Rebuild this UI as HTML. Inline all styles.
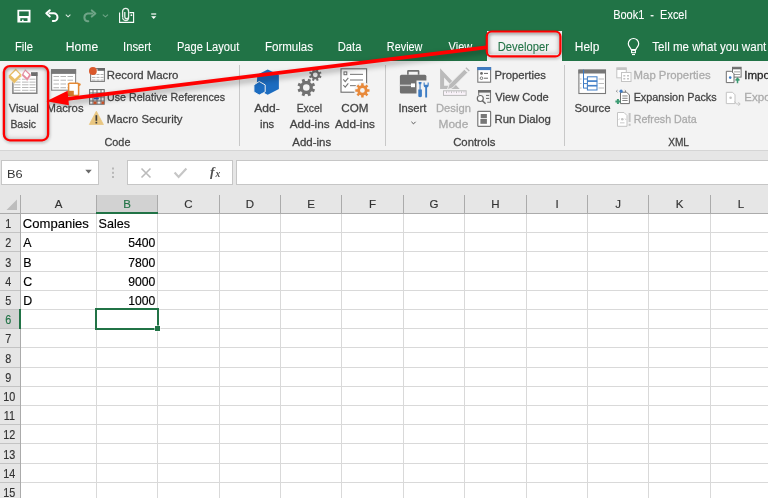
<!DOCTYPE html>
<html><head><meta charset="utf-8"><style>
html,body{margin:0;padding:0;background:#fff;overflow:hidden}
svg{display:block;will-change:transform}
text{font-family:"Liberation Sans",sans-serif}
</style></head><body>
<svg width="768" height="498" viewBox="0 0 768 498">
<rect x="0" y="0" width="768" height="61" fill="#217346"/>
<rect x="0" y="61" width="768" height="89" fill="#F3F3F3"/>
<rect x="0" y="150" width="768" height="1" fill="#D5D5D5"/>
<rect x="487" y="31" width="75" height="31" fill="#F3F3F3"/>
<rect x="239" y="65" width="1" height="81" fill="#C8C8C8"/>
<rect x="385" y="65" width="1" height="81" fill="#C8C8C8"/>
<rect x="564" y="65" width="1" height="81" fill="#C8C8C8"/>
<rect x="0" y="151" width="768" height="62" fill="#E6E6E6"/>
<rect x="1.5" y="160.5" width="97" height="24" fill="#FFFFFF" stroke="#C6C6C6" stroke-width="1"/>
<path d="M85.3 169.8 L91.8 169.8 L88.55 173.6 Z" fill="#6A6A6A"/>
<rect x="112" y="167.5" width="2" height="2" fill="#B8B8B8"/>
<rect x="112" y="171.8" width="2" height="2" fill="#B8B8B8"/>
<rect x="112" y="176" width="2" height="2" fill="#B8B8B8"/>
<rect x="127.5" y="160.5" width="105" height="24" fill="#FFFFFF" stroke="#C6C6C6" stroke-width="1"/>
<rect x="236.5" y="160.5" width="540" height="24" fill="#FFFFFF" stroke="#C6C6C6" stroke-width="1"/>
<path d="M141.5 168.5 L150.5 177.5 M150.5 168.5 L141.5 177.5" stroke="#BBBBBB" stroke-width="1.6" fill="none"/>
<path d="M174.6 172.6 L178.6 176.9 L186.4 168.4" stroke="#C6C6C6" stroke-width="2.2" fill="none"/>
<rect x="0" y="214" width="768" height="284" fill="#FFFFFF"/>
<rect x="0" y="214" width="20" height="284" fill="#E6E6E6"/>
<rect x="97" y="195" width="60" height="18" fill="#D2D2D2"/>
<rect x="0" y="310" width="20" height="18" fill="#D2D2D2"/>
<rect x="96" y="214" width="1" height="284" fill="#D9D9D9"/>
<rect x="157" y="214" width="1" height="284" fill="#D9D9D9"/>
<rect x="219" y="214" width="1" height="284" fill="#D9D9D9"/>
<rect x="280" y="214" width="1" height="284" fill="#D9D9D9"/>
<rect x="341" y="214" width="1" height="284" fill="#D9D9D9"/>
<rect x="403" y="214" width="1" height="284" fill="#D9D9D9"/>
<rect x="464" y="214" width="1" height="284" fill="#D9D9D9"/>
<rect x="526" y="214" width="1" height="284" fill="#D9D9D9"/>
<rect x="587" y="214" width="1" height="284" fill="#D9D9D9"/>
<rect x="648" y="214" width="1" height="284" fill="#D9D9D9"/>
<rect x="710" y="214" width="1" height="284" fill="#D9D9D9"/>
<rect x="21" y="232" width="747" height="1" fill="#D9D9D9"/>
<rect x="0" y="232" width="20" height="1" fill="#C3C3C3"/>
<rect x="21" y="251" width="747" height="1" fill="#D9D9D9"/>
<rect x="0" y="251" width="20" height="1" fill="#C3C3C3"/>
<rect x="21" y="271" width="747" height="1" fill="#D9D9D9"/>
<rect x="0" y="271" width="20" height="1" fill="#C3C3C3"/>
<rect x="21" y="290" width="747" height="1" fill="#D9D9D9"/>
<rect x="0" y="290" width="20" height="1" fill="#C3C3C3"/>
<rect x="21" y="309" width="747" height="1" fill="#D9D9D9"/>
<rect x="0" y="309" width="20" height="1" fill="#C3C3C3"/>
<rect x="21" y="328" width="747" height="1" fill="#D9D9D9"/>
<rect x="0" y="328" width="20" height="1" fill="#C3C3C3"/>
<rect x="21" y="347" width="747" height="1" fill="#D9D9D9"/>
<rect x="0" y="347" width="20" height="1" fill="#C3C3C3"/>
<rect x="21" y="367" width="747" height="1" fill="#D9D9D9"/>
<rect x="0" y="367" width="20" height="1" fill="#C3C3C3"/>
<rect x="21" y="386" width="747" height="1" fill="#D9D9D9"/>
<rect x="0" y="386" width="20" height="1" fill="#C3C3C3"/>
<rect x="21" y="405" width="747" height="1" fill="#D9D9D9"/>
<rect x="0" y="405" width="20" height="1" fill="#C3C3C3"/>
<rect x="21" y="424" width="747" height="1" fill="#D9D9D9"/>
<rect x="0" y="424" width="20" height="1" fill="#C3C3C3"/>
<rect x="21" y="443" width="747" height="1" fill="#D9D9D9"/>
<rect x="0" y="443" width="20" height="1" fill="#C3C3C3"/>
<rect x="21" y="463" width="747" height="1" fill="#D9D9D9"/>
<rect x="0" y="463" width="20" height="1" fill="#C3C3C3"/>
<rect x="21" y="482" width="747" height="1" fill="#D9D9D9"/>
<rect x="0" y="482" width="20" height="1" fill="#C3C3C3"/>
<rect x="21" y="501" width="747" height="1" fill="#D9D9D9"/>
<rect x="0" y="501" width="20" height="1" fill="#C3C3C3"/>
<rect x="96" y="195" width="1" height="18" fill="#ABABAB"/>
<rect x="157" y="195" width="1" height="18" fill="#ABABAB"/>
<rect x="219" y="195" width="1" height="18" fill="#ABABAB"/>
<rect x="280" y="195" width="1" height="18" fill="#ABABAB"/>
<rect x="341" y="195" width="1" height="18" fill="#ABABAB"/>
<rect x="403" y="195" width="1" height="18" fill="#ABABAB"/>
<rect x="464" y="195" width="1" height="18" fill="#ABABAB"/>
<rect x="526" y="195" width="1" height="18" fill="#ABABAB"/>
<rect x="587" y="195" width="1" height="18" fill="#ABABAB"/>
<rect x="648" y="195" width="1" height="18" fill="#ABABAB"/>
<rect x="710" y="195" width="1" height="18" fill="#ABABAB"/>
<rect x="0" y="213" width="768" height="1" fill="#ABABAB"/>
<rect x="20" y="195" width="1" height="303" fill="#ABABAB"/>
<rect x="96" y="212" width="62" height="2" fill="#217346"/>
<rect x="19" y="309" width="2" height="20" fill="#217346"/>
<path d="M17 199.5 L17 210 L6.5 210 Z" fill="#BDBDBD"/>
<rect x="96" y="309" width="62" height="20" fill="none" stroke="#217346" stroke-width="2"/>
<rect x="154.5" y="325.5" width="6" height="6" fill="#FFFFFF"/>
<rect x="155" y="326" width="5" height="5" fill="#217346"/>
<rect x="17.4" y="9.8" width="13.1" height="12.7" fill="#FFFFFF"/>
<rect x="19.2" y="11.4" width="9.5" height="4.6" fill="#217346"/>
<rect x="20.3" y="18.2" width="7.2" height="2.8" fill="#217346"/>
<rect x="22" y="19.6" width="1.6" height="1.6" fill="#FFFFFF"/>
<path d="M49.8 10.2 L46.3 13.3 L49.8 16.4" stroke="#FFFFFF" stroke-width="2" fill="none" stroke-linecap="round" stroke-linejoin="round"/>
<path d="M49.5 13.3 L53.6 13.3 A3.9 3.9 0 0 1 53.6 21.1 L52.8 21.1" stroke="#FFFFFF" stroke-width="2" fill="none" stroke-linecap="round"/>
<path d="M65.8 14.6 L68.1 16.8 L70.4 14.6" stroke="#D8E6DD" stroke-width="1.1" fill="none"/>
<g opacity="0.35"><path d="M91.8 10.4 L95.3 13.5 L91.8 16.6" stroke="#FFFFFF" stroke-width="2" fill="none" stroke-linecap="round" stroke-linejoin="round"/><path d="M92.1 13.5 L87.5 13.5 A4 4 0 0 0 87.5 21.3 L88.3 21.3" stroke="#FFFFFF" stroke-width="2" fill="none" stroke-linecap="round"/><path d="M102.8 14.6 L105.4 16.8 L108 14.6" stroke="#FFFFFF" stroke-width="1.1" fill="none"/></g>
<path d="M119.6 12.6 L119.6 22.4 L133.6 22.4 L133.6 12.6 L129.5 12.6" stroke="#FFFFFF" stroke-width="1.1" fill="none"/>
<path d="M122.6 17.5 L122.6 11.4 A3 3 0 0 1 128.6 11.4 L128.6 16.8 A1.9 1.9 0 0 1 124.8 16.8 L124.8 12" stroke="#E8F0EA" stroke-width="1.3" fill="none"/><path d="M122.6 17.5 A3 3 0 0 0 128.6 17.5" stroke="#E8F0EA" stroke-width="1.3" fill="none"/>
<circle cx="131.4" cy="15.2" r="0.9" fill="#FFFFFF"/>
<rect x="151.2" y="13.4" width="5" height="1.2" fill="#FFFFFF"/>
<path d="M151.1 16.3 L156.3 16.3 L153.7 18.9 Z" fill="#FFFFFF"/>
<path d="M631.1 49.6 C630.6 47.6 628.3 46.6 628.3 43.7 A5.2 5.2 0 0 1 638.7 43.7 C638.7 46.6 636.4 47.6 635.9 49.6 Z" stroke="#FFFFFF" stroke-width="1.2" fill="none" stroke-linejoin="round"/>
<rect x="631.6" y="50.3" width="3.8" height="2.4" stroke="#FFFFFF" stroke-width="1.1" fill="none"/>
<rect x="632" y="54" width="3" height="1.1" fill="#FFFFFF"/>
<rect x="12.9" y="72.4" width="23.9" height="20.9" fill="#FFFFFF"/><path d="M12.9 80 L12.9 93.3 L36.8 93.3 L36.8 72.2" stroke="#858585" stroke-width="1.5" fill="none"/>
<rect x="31" y="72.2" width="6.5" height="3.8" fill="#6E6E6E"/>
<rect x="14.2" y="78.7" width="6.300000000000001" height="1" fill="#B8B8B8"/>
<rect x="22" y="78.7" width="6.5" height="1" fill="#B8B8B8"/>
<rect x="29.5" y="78.7" width="6.0" height="1" fill="#B8B8B8"/>
<rect x="14.2" y="81.6" width="6.300000000000001" height="1" fill="#B8B8B8"/>
<rect x="22" y="81.6" width="6.5" height="1" fill="#B8B8B8"/>
<rect x="29.5" y="81.6" width="6.0" height="1" fill="#B8B8B8"/>
<rect x="14.2" y="84.3" width="6.300000000000001" height="1" fill="#B8B8B8"/>
<rect x="22" y="84.3" width="6.5" height="1" fill="#B8B8B8"/>
<rect x="29.5" y="84.3" width="6.0" height="1" fill="#B8B8B8"/>
<rect x="14.2" y="87.0" width="6.300000000000001" height="1" fill="#B8B8B8"/>
<rect x="22" y="87.0" width="6.5" height="1" fill="#B8B8B8"/>
<rect x="29.5" y="87.0" width="6.0" height="1" fill="#B8B8B8"/>
<rect x="14.2" y="89.8" width="6.300000000000001" height="1" fill="#B8B8B8"/>
<rect x="22" y="89.8" width="6.5" height="1" fill="#B8B8B8"/>
<rect x="29.5" y="89.8" width="6.0" height="1" fill="#B8B8B8"/>
<path d="M15.7 68.2 L21.4 74.3 L21.4 76.3 L14.2 83.7 L8.6 77.7 L8.6 75.4 Z" fill="#E9BF68" stroke="#F3F3F3" stroke-width="0.5"/>
<path d="M15.8 70.6 L19.7 74.5 L14.8 78.9 L10.8 75.2 Z" fill="#FFFFFF"/>
<path d="M25.2 69 L30.9 74.5 L30.9 75.8 L27.3 80.9 L21.8 75.6 L21.8 74.3 Z" fill="#E58A9E" stroke="#F3F3F3" stroke-width="0.5"/>
<path d="M25.3 71 L29.1 74.7 L27.1 77.7 L23.4 74.2 Z" fill="#FFFFFF"/>
<rect x="51.6" y="69.6" width="24" height="20.6" fill="#FFFFFF" stroke="#8A8A8A" stroke-width="1.1"/>
<rect x="51.1" y="69.1" width="25" height="4.8" fill="#787878"/>
<rect x="53.5" y="76.0" width="5.5" height="1" fill="#B5B5B5"/>
<rect x="60.5" y="76.0" width="5.5" height="1" fill="#B5B5B5"/>
<rect x="67.5" y="76.0" width="5.5" height="1" fill="#B5B5B5"/>
<rect x="53.5" y="79.7" width="5.5" height="1" fill="#B5B5B5"/>
<rect x="60.5" y="79.7" width="5.5" height="1" fill="#B5B5B5"/>
<rect x="67.5" y="79.7" width="5.5" height="1" fill="#B5B5B5"/>
<rect x="53.5" y="83.5" width="5.5" height="1" fill="#B5B5B5"/>
<rect x="60.5" y="83.5" width="5.5" height="1" fill="#B5B5B5"/>
<rect x="67.5" y="83.5" width="5.5" height="1" fill="#B5B5B5"/>
<rect x="53.5" y="87.2" width="5.5" height="1" fill="#B5B5B5"/>
<rect x="60.5" y="87.2" width="5.5" height="1" fill="#B5B5B5"/>
<rect x="67.5" y="87.2" width="5.5" height="1" fill="#B5B5B5"/>
<rect x="68.6" y="83.2" width="10" height="12.2" fill="#FFFFFF" stroke="#E58A35" stroke-width="1.5" rx="0.8"/>
<circle cx="79.3" cy="84.6" r="1.4" fill="#E58A35"/>
<rect x="68" y="90.8" width="5.8" height="5.2" fill="#D47B2A"/>
<rect x="90.6" y="68.6" width="13.8" height="12.8" fill="#FFFFFF" stroke="#7C7C7C" stroke-width="1.1"/>
<rect x="97.5" y="68" width="7.4" height="2.8" fill="#686868"/>
<rect x="92" y="74.1" width="3.5" height="0.9" fill="#A8A8A8"/>
<rect x="96.5" y="74.1" width="3.0" height="0.9" fill="#A8A8A8"/>
<rect x="100.5" y="74.1" width="3.0" height="0.9" fill="#A8A8A8"/>
<rect x="92" y="76.89999999999999" width="3.5" height="0.9" fill="#A8A8A8"/>
<rect x="96.5" y="76.89999999999999" width="3.0" height="0.9" fill="#A8A8A8"/>
<rect x="100.5" y="76.89999999999999" width="3.0" height="0.9" fill="#A8A8A8"/>
<rect x="92" y="79.6" width="3.5" height="0.9" fill="#A8A8A8"/>
<rect x="96.5" y="79.6" width="3.0" height="0.9" fill="#A8A8A8"/>
<rect x="100.5" y="79.6" width="3.0" height="0.9" fill="#A8A8A8"/>
<circle cx="92.9" cy="71" r="3.9" fill="#D9582B"/>
<rect x="89.6" y="89.6" width="14.6" height="14.6" fill="#FFFFFF" stroke="#6E6E6E" stroke-width="1.1"/>
<rect x="92.5" y="89.6" width="1" height="14.6" fill="#6E6E6E"/>
<rect x="89.6" y="92.5" width="14.6" height="1" fill="#6E6E6E"/>
<rect x="96.5" y="89.6" width="1" height="14.6" fill="#6E6E6E"/>
<rect x="89.6" y="96.5" width="14.6" height="1" fill="#6E6E6E"/>
<rect x="100.5" y="89.6" width="1" height="14.6" fill="#6E6E6E"/>
<rect x="89.6" y="100.5" width="14.6" height="1" fill="#6E6E6E"/>
<rect x="93.5" y="101.5" width="3" height="2.6" fill="#D5562A"/>
<rect x="101.5" y="101.5" width="2.6" height="2.6" fill="#D5562A"/>
<rect x="93.8" y="97.6" width="5" height="1.8" fill="#2B63B8"/>
<path d="M96.35 111.2 L103.4 124.5 L89.3 124.5 Z" fill="#E9C680" stroke="#E9C680" stroke-width="0.8" stroke-linejoin="round"/>
<rect x="95.5" y="115.2" width="1.7" height="5.6" fill="#3C3C3C"/>
<rect x="95.5" y="121.8" width="1.7" height="1.7" fill="#3C3C3C"/>
<path d="M267.7 69.4 L278.9 74.8 L278.9 88.9 L267.7 94.7 L256.5 88.9 L257.3 74.8 Z" fill="#1C6CC0"/>
<path d="M259.2 81.5 L265.2 84.9 L265.2 91.9 L259.2 95.1 L253.9 91.9 L253.9 84.9 Z" fill="#1C6CC0" stroke="#F3F3F3" stroke-width="1"/>
<path d="M312.81 88.58 L315.07 89.53 L313.94 92.26 L311.67 91.34 L310.14 92.87 L311.06 95.14 L308.33 96.27 L307.38 94.01 L305.22 94.01 L304.27 96.27 L301.54 95.14 L302.46 92.87 L300.93 91.34 L298.66 92.26 L297.53 89.53 L299.79 88.58 L299.79 86.42 L297.53 85.47 L298.66 82.74 L300.93 83.66 L302.46 82.13 L301.54 79.86 L304.27 78.73 L305.22 80.99 L307.38 80.99 L308.33 78.73 L311.06 79.86 L310.14 82.13 L311.67 83.66 L313.94 82.74 L315.07 85.47 L312.81 86.42 Z M309.60 87.50 A3.3 3.3 0 1 0 303.00 87.50 A3.3 3.3 0 1 0 309.60 87.50 Z" fill="#717171" fill-rule="evenodd"/>
<path d="M319.84 75.56 L321.53 76.25 L320.73 78.19 L319.04 77.47 L317.97 78.54 L318.69 80.23 L316.75 81.03 L316.06 79.34 L314.54 79.34 L313.85 81.03 L311.91 80.23 L312.63 78.54 L311.56 77.47 L309.87 78.19 L309.07 76.25 L310.76 75.56 L310.76 74.04 L309.07 73.35 L309.87 71.41 L311.56 72.13 L312.63 71.06 L311.91 69.37 L313.85 68.57 L314.54 70.26 L316.06 70.26 L316.75 68.57 L318.69 69.37 L317.97 71.06 L319.04 72.13 L320.73 71.41 L321.53 73.35 L319.84 74.04 Z M317.70 74.80 A2.4 2.4 0 1 0 312.90 74.80 A2.4 2.4 0 1 0 317.70 74.80 Z" fill="#717171" fill-rule="evenodd"/>
<rect x="341" y="68.8" width="25.6" height="23.4" fill="#FFFFFF" stroke="#6E6E6E" stroke-width="1.1"/>
<rect x="344" y="71.9" width="2.8" height="2.8" fill="none" stroke="#6E6E6E" stroke-width="1"/>
<rect x="350" y="73.80000000000001" width="13" height="1.2" fill="#8A8A8A"/>
<rect x="350" y="79.4" width="13" height="1.2" fill="#8A8A8A"/>
<rect x="350" y="85.0" width="13" height="1.2" fill="#8A8A8A"/>
<path d="M343.3 79.4 L345.2 81.6 L348.3 77.8 M343.3 85 L345.2 87.2 L348.3 83.4" stroke="#777777" stroke-width="1.1" fill="none"/>
<circle cx="362.4" cy="90.4" r="8.3" fill="#F3F3F3"/>
<path d="M367.45 89.17 L369.49 89.13 L369.49 91.67 L367.45 91.63 L366.84 93.10 L368.31 94.52 L366.52 96.31 L365.10 94.84 L363.63 95.45 L363.67 97.49 L361.13 97.49 L361.17 95.45 L359.70 94.84 L358.28 96.31 L356.49 94.52 L357.96 93.10 L357.35 91.63 L355.31 91.67 L355.31 89.13 L357.35 89.17 L357.96 87.70 L356.49 86.28 L358.28 84.49 L359.70 85.96 L361.17 85.35 L361.13 83.31 L363.67 83.31 L363.63 85.35 L365.10 85.96 L366.52 84.49 L368.31 86.28 L366.84 87.70 Z M364.80 90.40 A2.4 2.4 0 1 0 360.00 90.40 A2.4 2.4 0 1 0 364.80 90.40 Z" fill="#E8893A" fill-rule="evenodd"/>
<path d="M407.9 74.8 L407.9 71.3 Q407.9 70.9 408.4 70.9 L418.1 70.9 Q418.6 70.9 418.6 71.3 L418.6 74.8" stroke="#707070" stroke-width="1.6" fill="none"/>
<rect x="399.9" y="74.8" width="26.5" height="18.8" rx="1.6" fill="#707070"/>
<rect x="399.9" y="84.6" width="12" height="1.5" fill="#C9C9C9"/>
<rect x="411" y="83.4" width="4" height="3.8" fill="#FFFFFF"/>
<rect x="416.5" y="80.5" width="13.5" height="18" fill="#F3F3F3"/>
<path d="M418.6 82 L421.6 82 L421.2 84.2 L420.6 84.2 L420.6 89.6 L421.9 89.6 L421.9 96.6 Q420.1 98.1 418.3 96.6 L418.3 89.6 L419.5 89.6 L419.5 84.2 L418.9 84.2 Z" fill="#3D7DC5"/>
<path d="M423.6 82.4 L423.6 85.2 Q423.6 87.2 425.2 87.6 L425.2 97.6 L427.1 97.6 L427.1 87.6 Q428.7 87.2 428.7 85.2 L428.7 82.4 L427.6 82.4 L427.6 84.8 L424.7 84.8 L424.7 82.4 Z" fill="#3D7DC5"/>
<path d="M411.4 121.8 L413.5 123.9 L415.6 121.8" stroke="#555555" stroke-width="1" fill="none"/>
<path d="M440.1 68.3 L459.7 88.9 L440.1 88.9 Z M444.1 77.4 L444.1 85.7 L451.5 85.7 Z" fill="#BBBBBB" fill-rule="evenodd"/>
<path d="M447.3 89.6 L449 84.6 L464.4 69.2 L467.8 72.6 L452.4 88 Z" fill="#BBBBBB" stroke="#F3F3F3" stroke-width="0.9"/>
<path d="M465.4 68.2 L466.4 67.2 L469.8 70.6 L468.8 71.6 Z" fill="#BBBBBB"/>
<rect x="443.5" y="90.8" width="22.6" height="4.6" fill="#FAF3FA" stroke="#BBBBBB" stroke-width="1"/>
<rect x="446" y="91.3" width="0.9" height="1.8" fill="#BBBBBB"/>
<rect x="448.5" y="91.3" width="0.9" height="1.2" fill="#BBBBBB"/>
<rect x="451" y="91.3" width="0.9" height="1.8" fill="#BBBBBB"/>
<rect x="453.5" y="91.3" width="0.9" height="1.2" fill="#BBBBBB"/>
<rect x="456" y="91.3" width="0.9" height="1.8" fill="#BBBBBB"/>
<rect x="458.5" y="91.3" width="0.9" height="1.2" fill="#BBBBBB"/>
<rect x="461" y="91.3" width="0.9" height="1.8" fill="#BBBBBB"/>
<rect x="463.5" y="91.3" width="0.9" height="1.2" fill="#BBBBBB"/>
<rect x="477.8" y="67.6" width="12.8" height="14.6" fill="#FFFFFF" stroke="#7A7A7A" stroke-width="1.1"/>
<rect x="477.3" y="67.1" width="13.8" height="3" fill="#3E7BC2"/>
<circle cx="481.5" cy="73.4" r="1.4" fill="#6A6A6A"/><circle cx="481.5" cy="78.2" r="1.3" fill="none" stroke="#6A6A6A" stroke-width="0.9"/>
<rect x="484" y="72.9" width="4" height="1" fill="#6A6A6A"/><rect x="484" y="77.7" width="4" height="1" fill="#6A6A6A"/>
<path d="M478.7 95 L478.7 90.5 L490.5 90.5 L490.5 102.3 L487.2 102.3" stroke="#7A7A7A" stroke-width="1.1" fill="none"/>
<rect x="478.2" y="90" width="12.8" height="2.6" fill="#6A6A6A"/>
<rect x="486" y="94.9" width="3.2" height="1" fill="#6A6A6A"/><rect x="486" y="97.9" width="3.2" height="1" fill="#6A6A6A"/>
<circle cx="480.3" cy="98.5" r="3" fill="#FFFFFF" stroke="#6A6A6A" stroke-width="1.2"/>
<path d="M482.4 100.7 L485.6 103.8" stroke="#6A6A6A" stroke-width="1.5"/>
<rect x="477.8" y="111.4" width="12.8" height="14.9" fill="#FFFFFF" stroke="#7A7A7A" stroke-width="1.2" rx="0.5"/>
<rect x="480.7" y="114" width="6.2" height="4.2" fill="#7A7A7A"/><rect x="480.4" y="119" width="6.5" height="4.8" fill="#777777"/>
<rect x="578.9" y="70.1" width="26.6" height="23.4" fill="#FFFFFF" stroke="#7A7A7A" stroke-width="1.1"/>
<rect x="578.4" y="69.6" width="27.6" height="3.9" fill="#777777"/>
<rect x="598.5" y="78.5" width="5.5" height="1" fill="#BDBDBD"/>
<rect x="579.5" y="78.5" width="2" height="1" fill="#BDBDBD"/>
<rect x="598.5" y="83.0" width="5.5" height="1" fill="#BDBDBD"/>
<rect x="579.5" y="83.0" width="2" height="1" fill="#BDBDBD"/>
<rect x="598.5" y="87.5" width="5.5" height="1" fill="#BDBDBD"/>
<rect x="579.5" y="87.5" width="2" height="1" fill="#BDBDBD"/>
<path d="M583.5 69.6 L583.5 88.3 M583.5 79 L587 79 M583.5 83.6 L587 83.6 M583.5 88.1 L587 88.1" stroke="#3E7CC6" stroke-width="1" fill="none"/>
<rect x="587.4" y="76.8" width="9.6" height="4" fill="#FFFFFF" stroke="#3E7CC6" stroke-width="1"/>
<rect x="587.4" y="81.4" width="9.6" height="4" fill="#FFFFFF" stroke="#3E7CC6" stroke-width="1"/>
<rect x="587.4" y="86" width="9.6" height="4" fill="#FFFFFF" stroke="#3E7CC6" stroke-width="1"/>
<rect x="616.8" y="67.8" width="9.5" height="10" fill="#FFFFFF" stroke="#C4C4C4" stroke-width="1"/>
<rect x="616.8" y="67.8" width="9.5" height="2.2" fill="#C4C4C4"/>
<rect x="621.5" y="72.5" width="9.5" height="9" fill="#FFFFFF" stroke="#C4C4C4" stroke-width="1"/>
<rect x="623.3" y="75" width="2" height="1.5" fill="#C4C4C4"/><rect x="627" y="75" width="2" height="1.5" fill="#C4C4C4"/><rect x="623.3" y="78" width="2" height="1.5" fill="#C4C4C4"/><rect x="627" y="78" width="2" height="1.5" fill="#C4C4C4"/>
<path d="M620.5 92.2 L626.6 92.2 L629.4 95 L629.4 103.6 L620.5 103.6 Z" fill="#FFFFFF" stroke="#6E6E6E" stroke-width="1"/>
<rect x="622.3" y="95.5" width="5.3" height="0.9" fill="#777777"/>
<rect x="622.3" y="97.8" width="5.3" height="0.9" fill="#777777"/>
<rect x="622.3" y="100.1" width="5.3" height="0.9" fill="#777777"/>
<path d="M617.5 90.2 L616.3 91.2 L617.5 92.2 M624.8 90.2 L626 91.2 L624.8 92.2" stroke="#6E6E6E" stroke-width="0.8" fill="none"/>
<circle cx="621.1" cy="91.2" r="1.6" fill="#3E7CC6"/>
<path d="M615.4 101.4 L620.4 101.4 M617.9 98.9 L617.9 103.9" stroke="#3D9B73" stroke-width="2"/>
<path d="M617.5 112.5 L624 112.5 L627 115.5 L627 126.3 L617.5 126.3 Z" fill="#FFFFFF" stroke="#C4C4C4" stroke-width="1"/>
<path d="M619.6 118.5 L618.8 119.3 L619.6 120.1 M625 118.5 L625.8 119.3 L625 120.1" stroke="#C4C4C4" stroke-width="0.8" fill="none"/>
<circle cx="622.3" cy="119.3" r="1.3" fill="#C4C4C4"/>
<rect x="620" y="122.4" width="4.5" height="0.9" fill="#C4C4C4"/>
<rect x="628.6" y="113" width="2" height="9" fill="#C4C4C4"/><rect x="628.6" y="123.8" width="2" height="2" fill="#C4C4C4"/>
<rect x="732.5" y="67.3" width="8.6" height="9.8" fill="#FFFFFF" stroke="#6E6E6E" stroke-width="1"/>
<rect x="732.5" y="67.3" width="8.6" height="2" fill="#6E6E6E"/>
<rect x="734" y="71.5" width="6" height="0.8" fill="#8A8A8A"/><rect x="734" y="74" width="6" height="0.8" fill="#8A8A8A"/>
<path d="M726.3 71.3 L731.5 71.3 L734 73.8 L734 82.6 L726.3 82.6 Z" fill="#FFFFFF" stroke="#6E6E6E" stroke-width="1"/>
<circle cx="730.2" cy="77.6" r="1.3" fill="#3E7CC6"/>
<path d="M737.5 83.3 L737.5 78.5 M735.6 80.4 L737.5 78.3 L739.4 80.4" stroke="#3D9B73" stroke-width="1.5" fill="none"/>
<path d="M726.3 92.3 L732.5 92.3 L735 94.8 L735 103.6 L726.3 103.6 Z" fill="#FFFFFF" stroke="#C4C4C4" stroke-width="1"/>
<circle cx="730.6" cy="97.8" r="1.3" fill="#C4C4C4"/>
<path d="M734.5 101.5 L736.5 104 L740 104 M738.4 102.2 L740.2 104 L738.4 105.8" stroke="#C4C4C4" stroke-width="1" fill="none"/>
<text x="613.14" y="19.30" font-size="12.3" fill="#FFFFFF" stroke="#FFFFFF" stroke-width="0.08" textLength="73.78" lengthAdjust="spacingAndGlyphs" xml:space="preserve">Book1  -  Excel</text>
<text x="14.92" y="50.90" font-size="12" fill="#FFFFFF" stroke="#FFFFFF" stroke-width="0.08" textLength="18.14" lengthAdjust="spacingAndGlyphs" xml:space="preserve">File</text>
<text x="65.75" y="50.90" font-size="12" fill="#FFFFFF" stroke="#FFFFFF" stroke-width="0.08" textLength="32.44" lengthAdjust="spacingAndGlyphs" xml:space="preserve">Home</text>
<text x="123.02" y="50.90" font-size="12" fill="#FFFFFF" stroke="#FFFFFF" stroke-width="0.08" textLength="28.19" lengthAdjust="spacingAndGlyphs" xml:space="preserve">Insert</text>
<text x="176.93" y="50.90" font-size="12" fill="#FFFFFF" stroke="#FFFFFF" stroke-width="0.08" textLength="62.33" lengthAdjust="spacingAndGlyphs" xml:space="preserve">Page Layout</text>
<text x="264.90" y="50.90" font-size="12" fill="#FFFFFF" stroke="#FFFFFF" stroke-width="0.08" textLength="48.16" lengthAdjust="spacingAndGlyphs" xml:space="preserve">Formulas</text>
<text x="337.72" y="50.90" font-size="12" fill="#FFFFFF" stroke="#FFFFFF" stroke-width="0.08" textLength="23.81" lengthAdjust="spacingAndGlyphs" xml:space="preserve">Data</text>
<text x="386.85" y="50.90" font-size="12" fill="#FFFFFF" stroke="#FFFFFF" stroke-width="0.08" textLength="35.62" lengthAdjust="spacingAndGlyphs" xml:space="preserve">Review</text>
<text x="448.60" y="50.90" font-size="12" fill="#FFFFFF" stroke="#FFFFFF" stroke-width="0.08" textLength="23.57" lengthAdjust="spacingAndGlyphs" xml:space="preserve">View</text>
<text x="574.76" y="50.90" font-size="12" fill="#FFFFFF" stroke="#FFFFFF" stroke-width="0.08" textLength="24.62" lengthAdjust="spacingAndGlyphs" xml:space="preserve">Help</text>
<text x="652.32" y="50.90" font-size="12" fill="#FFFFFF" stroke="#FFFFFF" stroke-width="0.08" textLength="114.04" lengthAdjust="spacingAndGlyphs" xml:space="preserve">Tell me what you want</text>
<text x="497.72" y="51.00" font-size="12" fill="#217346" stroke="#217346" stroke-width="0.08" textLength="51.33" lengthAdjust="spacingAndGlyphs" xml:space="preserve">Developer</text>
<text x="8.70" y="112.00" font-size="11.6" fill="#444444" stroke="#444444" stroke-width="0.28" textLength="30.03" lengthAdjust="spacingAndGlyphs" xml:space="preserve">Visual</text>
<text x="10.38" y="127.70" font-size="11.6" fill="#444444" stroke="#444444" stroke-width="0.28" textLength="25.58" lengthAdjust="spacingAndGlyphs" xml:space="preserve">Basic</text>
<text x="46.52" y="112.00" font-size="11.6" fill="#444444" stroke="#444444" stroke-width="0.28" textLength="37.04" lengthAdjust="spacingAndGlyphs" xml:space="preserve">Macros</text>
<text x="106.81" y="79.40" font-size="11.6" fill="#444444" stroke="#444444" stroke-width="0.28" textLength="71.55" lengthAdjust="spacingAndGlyphs" xml:space="preserve">Record Macro</text>
<text x="107.03" y="101.20" font-size="11.6" fill="#444444" stroke="#444444" stroke-width="0.28" textLength="118.10" lengthAdjust="spacingAndGlyphs" xml:space="preserve">Use Relative References</text>
<text x="106.81" y="123.20" font-size="11.6" fill="#444444" stroke="#444444" stroke-width="0.28" textLength="75.69" lengthAdjust="spacingAndGlyphs" xml:space="preserve">Macro Security</text>
<text x="104.49" y="145.65" font-size="11.6" fill="#444444" stroke="#444444" stroke-width="0.28" textLength="25.95" lengthAdjust="spacingAndGlyphs" xml:space="preserve">Code</text>
<text x="254.30" y="112.00" font-size="11.6" fill="#444444" stroke="#444444" stroke-width="0.28" textLength="25.44" lengthAdjust="spacingAndGlyphs" xml:space="preserve">Add-</text>
<text x="259.90" y="127.70" font-size="11.6" fill="#444444" stroke="#444444" stroke-width="0.28" textLength="14.35" lengthAdjust="spacingAndGlyphs" xml:space="preserve">ins</text>
<text x="296.69" y="112.00" font-size="11.6" fill="#444444" stroke="#444444" stroke-width="0.28" textLength="25.40" lengthAdjust="spacingAndGlyphs" xml:space="preserve">Excel</text>
<text x="289.75" y="127.70" font-size="11.6" fill="#444444" stroke="#444444" stroke-width="0.28" textLength="39.92" lengthAdjust="spacingAndGlyphs" xml:space="preserve">Add-ins</text>
<text x="341.25" y="112.00" font-size="11.6" fill="#444444" stroke="#444444" stroke-width="0.28" textLength="27.23" lengthAdjust="spacingAndGlyphs" xml:space="preserve">COM</text>
<text x="335.00" y="127.70" font-size="11.6" fill="#444444" stroke="#444444" stroke-width="0.28" textLength="39.87" lengthAdjust="spacingAndGlyphs" xml:space="preserve">Add-ins</text>
<text x="292.25" y="145.65" font-size="11.6" fill="#444444" stroke="#444444" stroke-width="0.28" textLength="38.91" lengthAdjust="spacingAndGlyphs" xml:space="preserve">Add-ins</text>
<text x="398.42" y="112.00" font-size="11.6" fill="#444444" stroke="#444444" stroke-width="0.28" textLength="28.04" lengthAdjust="spacingAndGlyphs" xml:space="preserve">Insert</text>
<text x="436.02" y="112.00" font-size="11.6" fill="#ABABAB" stroke="#ABABAB" stroke-width="0.28" textLength="34.91" lengthAdjust="spacingAndGlyphs" xml:space="preserve">Design</text>
<text x="438.47" y="127.70" font-size="11.6" fill="#ABABAB" stroke="#ABABAB" stroke-width="0.28" textLength="29.81" lengthAdjust="spacingAndGlyphs" xml:space="preserve">Mode</text>
<text x="494.42" y="79.40" font-size="11.6" fill="#444444" stroke="#444444" stroke-width="0.28" textLength="51.43" lengthAdjust="spacingAndGlyphs" xml:space="preserve">Properties</text>
<text x="495.30" y="101.20" font-size="11.6" fill="#444444" stroke="#444444" stroke-width="0.28" textLength="53.45" lengthAdjust="spacingAndGlyphs" xml:space="preserve">View Code</text>
<text x="494.41" y="123.20" font-size="11.6" fill="#444444" stroke="#444444" stroke-width="0.28" textLength="56.43" lengthAdjust="spacingAndGlyphs" xml:space="preserve">Run Dialog</text>
<text x="453.17" y="145.65" font-size="11.6" fill="#444444" stroke="#444444" stroke-width="0.28" textLength="42.19" lengthAdjust="spacingAndGlyphs" xml:space="preserve">Controls</text>
<text x="574.54" y="112.00" font-size="11.6" fill="#444444" stroke="#444444" stroke-width="0.28" textLength="36.02" lengthAdjust="spacingAndGlyphs" xml:space="preserve">Source</text>
<text x="633.61" y="79.40" font-size="11.6" fill="#ABABAB" stroke="#ABABAB" stroke-width="0.28" textLength="77.04" lengthAdjust="spacingAndGlyphs" xml:space="preserve">Map Properties</text>
<text x="633.65" y="101.20" font-size="11.6" fill="#444444" stroke="#444444" stroke-width="0.28" textLength="82.98" lengthAdjust="spacingAndGlyphs" xml:space="preserve">Expansion Packs</text>
<text x="633.66" y="123.20" font-size="11.6" fill="#ABABAB" stroke="#ABABAB" stroke-width="0.28" textLength="63.07" lengthAdjust="spacingAndGlyphs" xml:space="preserve">Refresh Data</text>
<text x="668.14" y="145.65" font-size="11.6" fill="#444444" stroke="#444444" stroke-width="0.28" textLength="20.81" lengthAdjust="spacingAndGlyphs" xml:space="preserve">XML</text>
<text x="7.10" y="177.60" font-size="11.8" fill="#333333" stroke="#333333" stroke-width="0" textLength="15.61" lengthAdjust="spacingAndGlyphs" xml:space="preserve">B6</text>
<text x="22.79" y="228.00" font-size="12.6" fill="#000000" stroke="#000000" stroke-width="0.15" textLength="66.12" lengthAdjust="spacingAndGlyphs" xml:space="preserve">Companies</text>
<text x="98.51" y="228.30" font-size="12.6" fill="#000000" stroke="#000000" stroke-width="0.15" textLength="31.49" lengthAdjust="spacingAndGlyphs" xml:space="preserve">Sales</text>
<text x="58.50" y="208.00" font-size="11.5" fill="#333333" stroke="#333333" stroke-width="0.15" text-anchor="middle" style="font-family:'Liberation Sans';font-style:normal">A</text>
<text x="127.00" y="208.00" font-size="11.5" fill="#217346" stroke="#217346" stroke-width="0.15" text-anchor="middle" style="font-family:'Liberation Sans';font-style:normal">B</text>
<text x="188.50" y="208.00" font-size="11.5" fill="#333333" stroke="#333333" stroke-width="0.15" text-anchor="middle" style="font-family:'Liberation Sans';font-style:normal">C</text>
<text x="250.00" y="208.00" font-size="11.5" fill="#333333" stroke="#333333" stroke-width="0.15" text-anchor="middle" style="font-family:'Liberation Sans';font-style:normal">D</text>
<text x="311.00" y="208.00" font-size="11.5" fill="#333333" stroke="#333333" stroke-width="0.15" text-anchor="middle" style="font-family:'Liberation Sans';font-style:normal">E</text>
<text x="372.50" y="208.00" font-size="11.5" fill="#333333" stroke="#333333" stroke-width="0.15" text-anchor="middle" style="font-family:'Liberation Sans';font-style:normal">F</text>
<text x="434.00" y="208.00" font-size="11.5" fill="#333333" stroke="#333333" stroke-width="0.15" text-anchor="middle" style="font-family:'Liberation Sans';font-style:normal">G</text>
<text x="495.50" y="208.00" font-size="11.5" fill="#333333" stroke="#333333" stroke-width="0.15" text-anchor="middle" style="font-family:'Liberation Sans';font-style:normal">H</text>
<text x="557.00" y="208.00" font-size="11.5" fill="#333333" stroke="#333333" stroke-width="0.15" text-anchor="middle" style="font-family:'Liberation Sans';font-style:normal">I</text>
<text x="618.00" y="208.00" font-size="11.5" fill="#333333" stroke="#333333" stroke-width="0.15" text-anchor="middle" style="font-family:'Liberation Sans';font-style:normal">J</text>
<text x="679.50" y="208.00" font-size="11.5" fill="#333333" stroke="#333333" stroke-width="0.15" text-anchor="middle" style="font-family:'Liberation Sans';font-style:normal">K</text>
<text x="741.00" y="208.00" font-size="11.5" fill="#333333" stroke="#333333" stroke-width="0.15" text-anchor="middle" style="font-family:'Liberation Sans';font-style:normal">L</text>
<text x="8.30" y="227.80" font-size="12" fill="#333333" stroke="#333333" stroke-width="0.15" text-anchor="middle" transform="translate(8.30 0) scale(0.9 1) translate(-8.30 0)" style="font-family:'Liberation Sans';font-style:normal">1</text>
<text x="8.30" y="246.80" font-size="12" fill="#333333" stroke="#333333" stroke-width="0.15" text-anchor="middle" transform="translate(8.30 0) scale(0.9 1) translate(-8.30 0)" style="font-family:'Liberation Sans';font-style:normal">2</text>
<text x="8.30" y="266.80" font-size="12" fill="#333333" stroke="#333333" stroke-width="0.15" text-anchor="middle" transform="translate(8.30 0) scale(0.9 1) translate(-8.30 0)" style="font-family:'Liberation Sans';font-style:normal">3</text>
<text x="8.30" y="285.80" font-size="12" fill="#333333" stroke="#333333" stroke-width="0.15" text-anchor="middle" transform="translate(8.30 0) scale(0.9 1) translate(-8.30 0)" style="font-family:'Liberation Sans';font-style:normal">4</text>
<text x="8.30" y="304.80" font-size="12" fill="#333333" stroke="#333333" stroke-width="0.15" text-anchor="middle" transform="translate(8.30 0) scale(0.9 1) translate(-8.30 0)" style="font-family:'Liberation Sans';font-style:normal">5</text>
<text x="8.30" y="323.80" font-size="12" fill="#217346" stroke="#217346" stroke-width="0.15" text-anchor="middle" transform="translate(8.30 0) scale(0.9 1) translate(-8.30 0)" style="font-family:'Liberation Sans';font-style:normal">6</text>
<text x="8.30" y="342.80" font-size="12" fill="#333333" stroke="#333333" stroke-width="0.15" text-anchor="middle" transform="translate(8.30 0) scale(0.9 1) translate(-8.30 0)" style="font-family:'Liberation Sans';font-style:normal">7</text>
<text x="8.30" y="362.80" font-size="12" fill="#333333" stroke="#333333" stroke-width="0.15" text-anchor="middle" transform="translate(8.30 0) scale(0.9 1) translate(-8.30 0)" style="font-family:'Liberation Sans';font-style:normal">8</text>
<text x="8.30" y="381.80" font-size="12" fill="#333333" stroke="#333333" stroke-width="0.15" text-anchor="middle" transform="translate(8.30 0) scale(0.9 1) translate(-8.30 0)" style="font-family:'Liberation Sans';font-style:normal">9</text>
<text x="9.30" y="400.80" font-size="12" fill="#333333" stroke="#333333" stroke-width="0.15" text-anchor="middle" transform="translate(9.30 0) scale(0.9 1) translate(-9.30 0)" style="font-family:'Liberation Sans';font-style:normal">10</text>
<text x="9.30" y="419.80" font-size="12" fill="#333333" stroke="#333333" stroke-width="0.15" text-anchor="middle" transform="translate(9.30 0) scale(0.9 1) translate(-9.30 0)" style="font-family:'Liberation Sans';font-style:normal">11</text>
<text x="9.30" y="438.80" font-size="12" fill="#333333" stroke="#333333" stroke-width="0.15" text-anchor="middle" transform="translate(9.30 0) scale(0.9 1) translate(-9.30 0)" style="font-family:'Liberation Sans';font-style:normal">12</text>
<text x="9.30" y="458.80" font-size="12" fill="#333333" stroke="#333333" stroke-width="0.15" text-anchor="middle" transform="translate(9.30 0) scale(0.9 1) translate(-9.30 0)" style="font-family:'Liberation Sans';font-style:normal">13</text>
<text x="9.30" y="477.80" font-size="12" fill="#333333" stroke="#333333" stroke-width="0.15" text-anchor="middle" transform="translate(9.30 0) scale(0.9 1) translate(-9.30 0)" style="font-family:'Liberation Sans';font-style:normal">14</text>
<text x="9.30" y="496.80" font-size="12" fill="#333333" stroke="#333333" stroke-width="0.15" text-anchor="middle" transform="translate(9.30 0) scale(0.9 1) translate(-9.30 0)" style="font-family:'Liberation Sans';font-style:normal">15</text>
<text x="23.20" y="246.70" font-size="12.4" fill="#000000" stroke="#000000" stroke-width="0.15" text-anchor="start" style="font-family:'Liberation Sans';font-style:normal">A</text>
<text x="155.40" y="246.70" font-size="12.2" fill="#000000" stroke="#000000" stroke-width="0.15" text-anchor="end" style="font-family:'Liberation Sans';font-style:normal">5400</text>
<text x="23.20" y="266.70" font-size="12.4" fill="#000000" stroke="#000000" stroke-width="0.15" text-anchor="start" style="font-family:'Liberation Sans';font-style:normal">B</text>
<text x="155.40" y="266.70" font-size="12.2" fill="#000000" stroke="#000000" stroke-width="0.15" text-anchor="end" style="font-family:'Liberation Sans';font-style:normal">7800</text>
<text x="23.20" y="285.70" font-size="12.4" fill="#000000" stroke="#000000" stroke-width="0.15" text-anchor="start" style="font-family:'Liberation Sans';font-style:normal">C</text>
<text x="155.40" y="285.70" font-size="12.2" fill="#000000" stroke="#000000" stroke-width="0.15" text-anchor="end" style="font-family:'Liberation Sans';font-style:normal">9000</text>
<text x="23.20" y="304.70" font-size="12.4" fill="#000000" stroke="#000000" stroke-width="0.15" text-anchor="start" style="font-family:'Liberation Sans';font-style:normal">D</text>
<text x="155.40" y="304.70" font-size="12.2" fill="#000000" stroke="#000000" stroke-width="0.15" text-anchor="end" style="font-family:'Liberation Sans';font-style:normal">1000</text>
<text x="210.00" y="176.00" font-size="13.5" fill="#505050" stroke="#505050" stroke-width="0" text-anchor="start" style="font-family:'Liberation Serif';font-style:italic;font-weight:bold">f</text>
<text x="215.40" y="176.80" font-size="9.5" fill="#505050" stroke="#505050" stroke-width="0" text-anchor="start" style="font-family:'Liberation Serif';font-style:italic;font-weight:bold">x</text>
<text x="744.20" y="79.40" font-size="11.6" fill="#262626" stroke="#262626" stroke-width="0.28">Impo</text>
<text x="744.20" y="101.20" font-size="11.6" fill="#ABABAB" stroke="#ABABAB" stroke-width="0.28">Expo</text>
<defs><filter id="sh" x="-20%" y="-20%" width="140%" height="140%"><feGaussianBlur stdDeviation="1.6"/></filter><filter id="sh2" x="-20%" y="-300%" width="140%" height="700%"><feGaussianBlur stdDeviation="2.4"/></filter><filter id="ish" x="-20%" y="-20%" width="140%" height="140%"><feGaussianBlur stdDeviation="2.2"/></filter><clipPath id="c1"><rect x="4.8" y="67.2" width="42.3" height="72" rx="5"/></clipPath><clipPath id="c2"><rect x="487.9" y="32.5" width="71.4" height="22.1" rx="4"/></clipPath></defs>
<g clip-path="url(#c1)"><rect x="3.8" y="66.2" width="44.3" height="74" rx="6" fill="none" stroke="#9A9A9A" stroke-width="4" filter="url(#ish)" opacity="0.55"/></g>
<g clip-path="url(#c2)"><rect x="486.9" y="31.5" width="73.4" height="24.1" rx="5" fill="none" stroke="#9A9A9A" stroke-width="4" filter="url(#ish)" opacity="0.55"/></g>
<g filter="url(#sh)" opacity="0.28"><rect x="4.5" y="67.6" width="44.3" height="74.2" rx="6" fill="none" stroke="#000" stroke-width="2.2"/><rect x="487.6" y="33.1" width="73.4" height="24.9" rx="5" fill="none" stroke="#000" stroke-width="2.2"/><path d="M487 50.6 L69 102.1" stroke="#000" stroke-width="5" filter="url(#sh2)"/><path d="M47.3 103.6 L68.7 93.1 L69.9 107.6 Z" fill="#000"/></g>
<rect x="3.9" y="66.1" width="44.2" height="74.2" rx="6" fill="none" stroke="#FF0000" stroke-width="2.3"/>
<rect x="486.8" y="31.5" width="73.6" height="24.9" rx="5" fill="none" stroke="#FF0000" stroke-width="2.2"/>
<path d="M486.5 47.3 L67.5 98.8" stroke="#FF0000" stroke-width="3.7"/>
<path d="M46.3 101.3 L67.7 90.8 L68.9 105.3 Z" fill="#FF0000"/>
</svg></body></html>
